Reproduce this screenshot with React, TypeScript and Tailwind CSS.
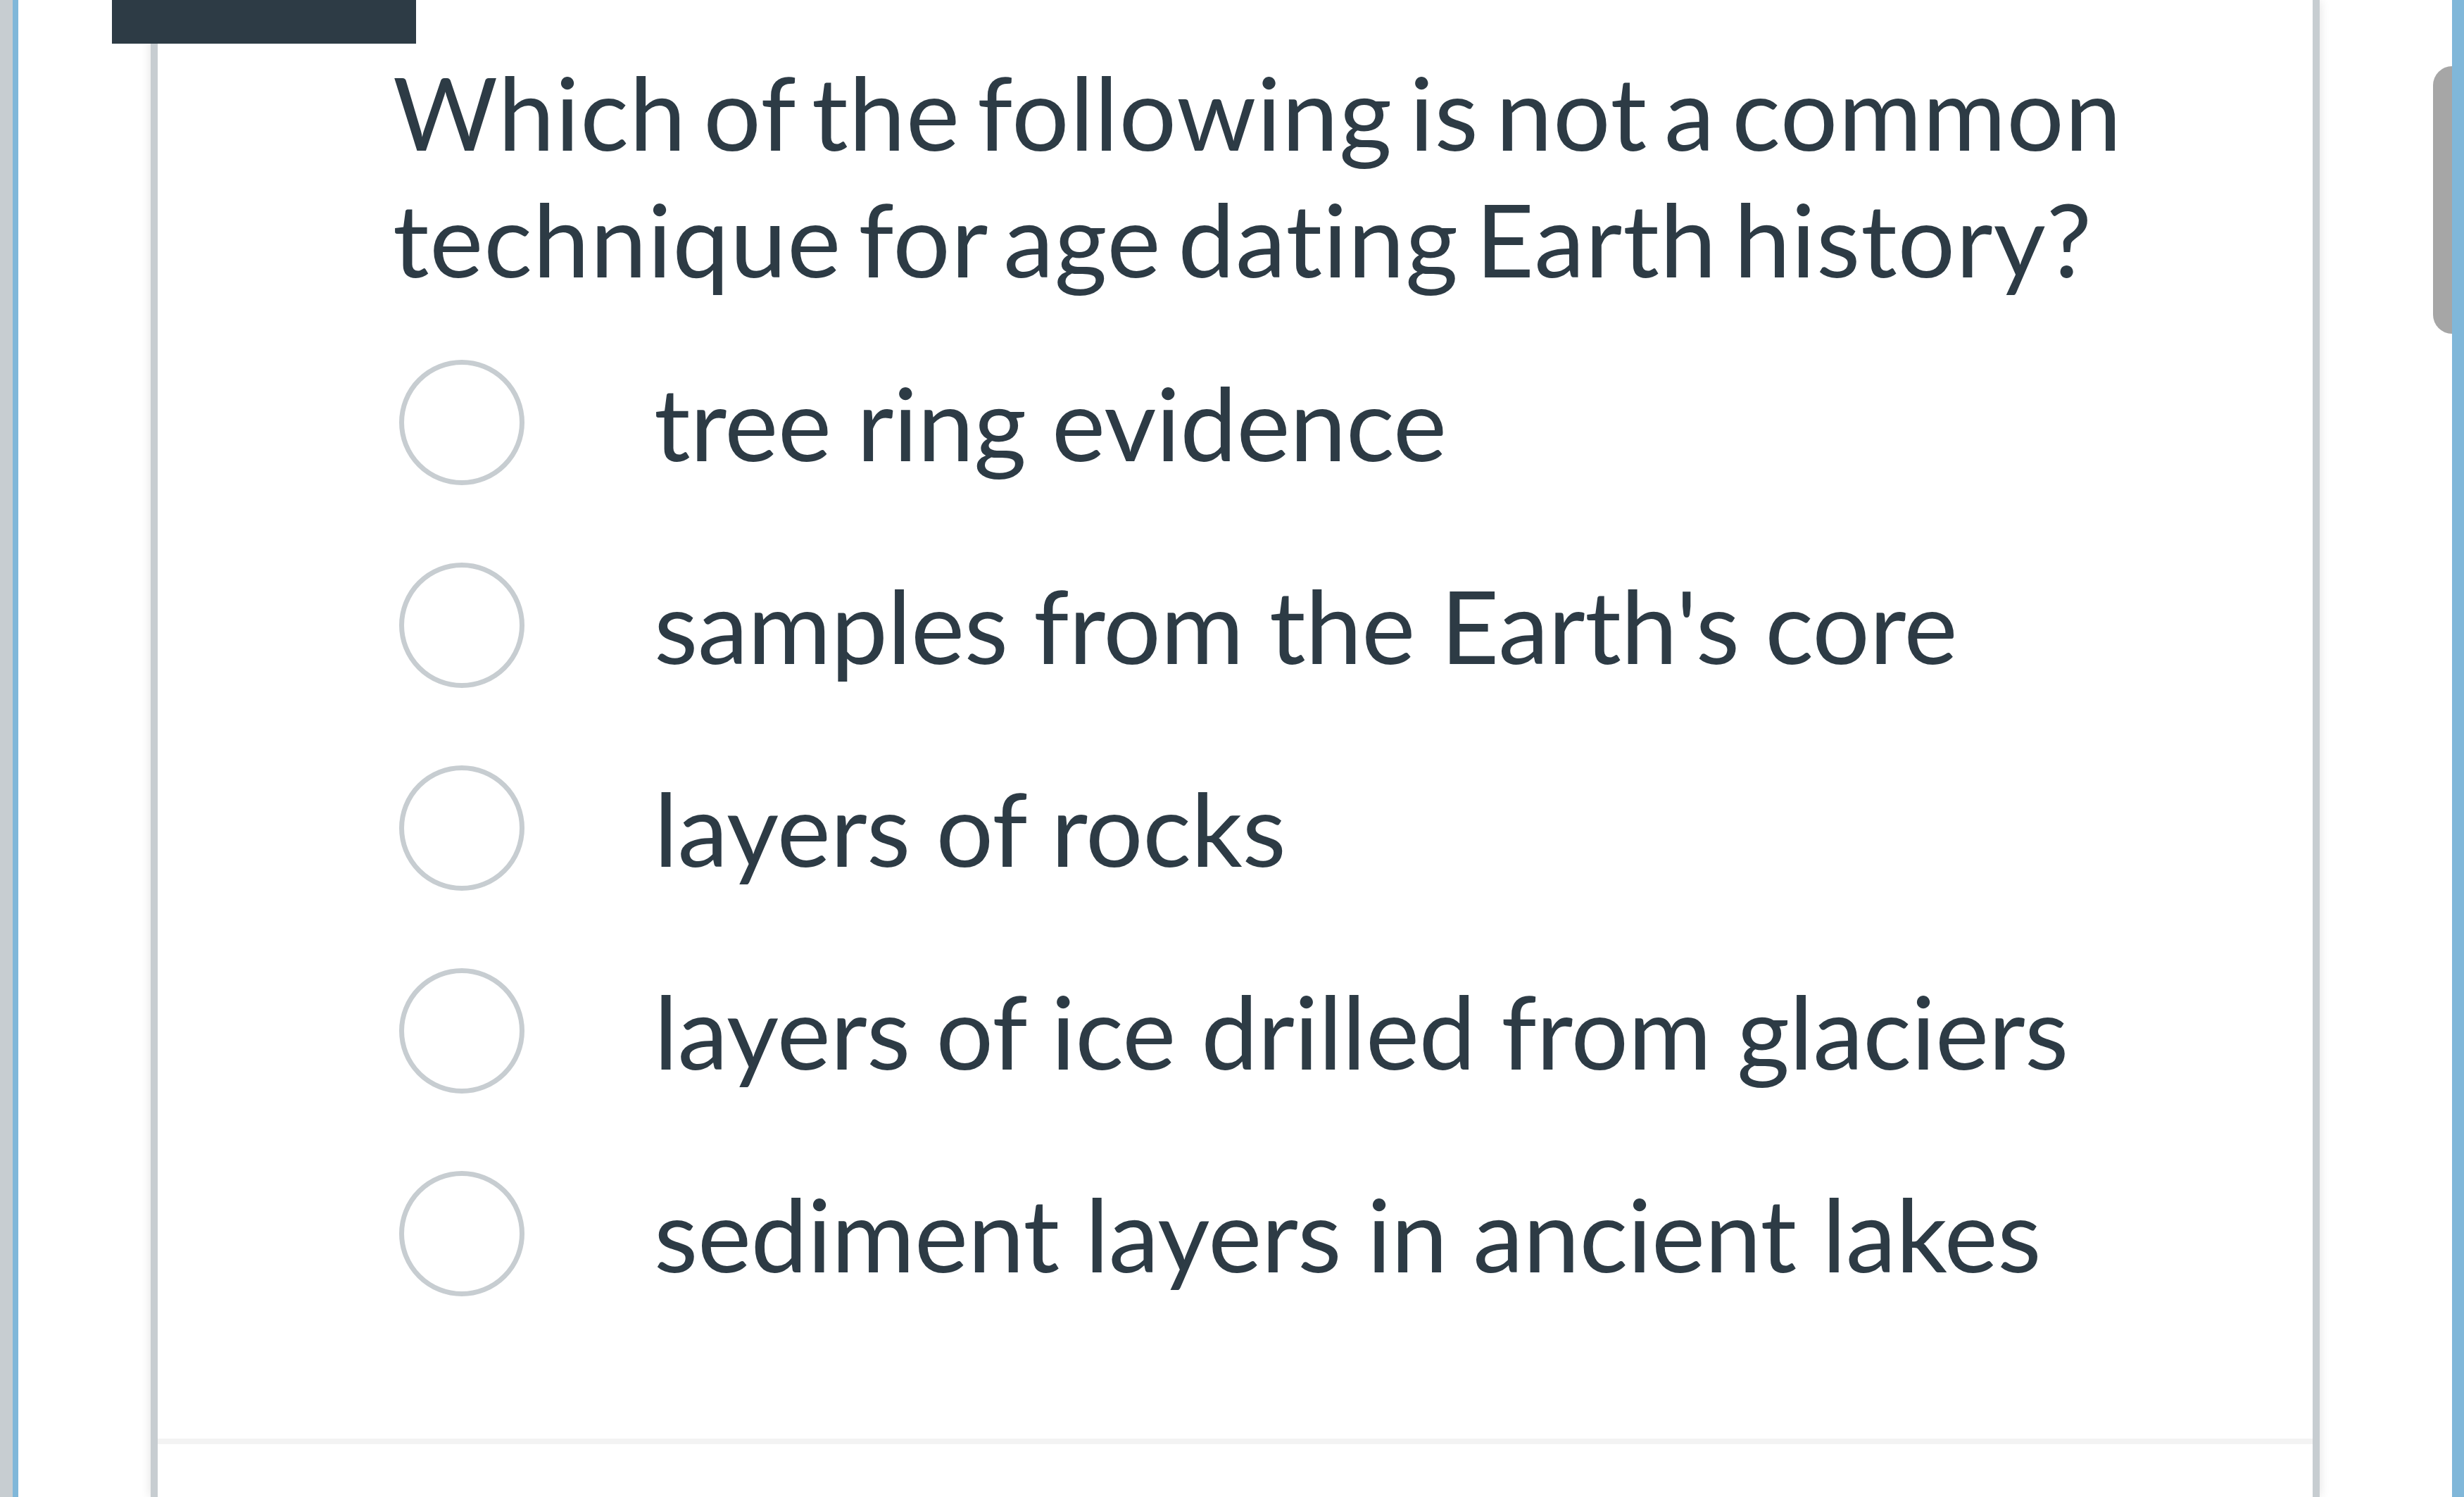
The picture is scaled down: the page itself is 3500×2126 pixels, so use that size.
import type { FC } from 'react'

const options = [
  'tree ring evidence',
  "samples from the Earth's core",
  'layers of rocks',
  'layers of ice drilled from glaciers',
  'sediment layers in ancient lakes',
]

const OptionRow: FC<{ label: string }> = ({ label }) => (
  <li className="flex h-[288px] items-center">
    <span className="ml-[9px] block h-[178px] w-[178px] shrink-0 rounded-full border-[7px] border-[#c7cdd1] bg-white" />
    <span className="ml-[184px] whitespace-nowrap text-[144px] leading-[180px] tracking-[-0.4px]">
      {label}
    </span>
  </li>
)

export default function App() {
  return (
    <div className="flex h-[2126px] w-[3500px] overflow-hidden bg-white font-['Lato','Liberation_Sans',sans-serif] text-[#2d3b45] [font-variant-ligatures:none]">
      {/* left frame */}
      <div className="w-[18px] bg-[#c7cdd1]" />
      <div className="w-[8px] bg-[#80b7d9]" />

      {/* main area */}
      <div className="relative flex-1 bg-white">
        {/* header tab */}
        <div className="absolute left-[133px] top-0 z-10 h-[62px] w-[432px] bg-[#2d3b45]" />

        {/* question card */}
        <div className="ml-[188px] flex h-full w-[3081px] flex-col border-x-[10px] border-[#c7cdd1] bg-white shadow-[0_0_14px_rgba(0,0,0,0.12)]">
          <div className="pl-[334px] pt-[69px] pr-[200px]">
            <p className="text-[144px] leading-[180px] tracking-[1px] [word-spacing:-14px]">
              Which of the following is not a common technique for age dating Earth history?
            </p>
            <ul className="mt-[27px] flex flex-col">
              {options.map((option) => (
                <OptionRow key={option} label={option} />
              ))}
            </ul>
          </div>
          <div className="mt-[147px] h-[8px] w-full bg-[#f3f3f3]" />
        </div>

        {/* scrollbar thumb */}
        <div className="absolute right-0 top-[94px] h-[380px] w-[27px] rounded-l-full rounded-r-[10px] bg-[#a6a6a6]" />
      </div>

      {/* right frame */}
      <div className="w-[17px] bg-[#80b7d9]" />
    </div>
  )
}
